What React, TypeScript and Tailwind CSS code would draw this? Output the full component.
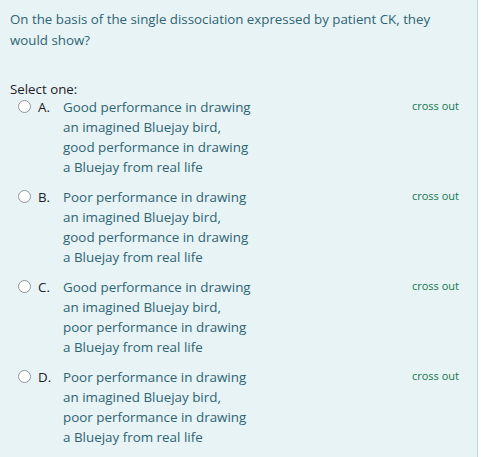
import React from "react";

const options = [
  { l: "A.", t: ["Good performance in drawing", "an imagined Bluejay bird,", "good performance in drawing", "a Bluejay from real life"] },
  { l: "B.", t: ["Poor performance in drawing", "an imagined Bluejay bird,", "good performance in drawing", "a Bluejay from real life"] },
  { l: "C.", t: ["Good performance in drawing", "an imagined Bluejay bird,", "poor performance in drawing", "a Bluejay from real life"] },
  { l: "D.", t: ["Poor performance in drawing", "an imagined Bluejay bird,", "poor performance in drawing", "a Bluejay from real life"] },
];

export default function App() {
  return (
    <div
      className="w-[478px] h-[457px] bg-[#e7f3f5] border-r border-[#b8dce2] text-[#2f6473] pl-[10px] pr-[18px] pt-[9px] overflow-hidden"
      style={{ fontFamily: '"Open Sans", "Noto Sans", sans-serif' }}
    >
      <p className="text-[13.3px] leading-[21px]">
        On the basis of the single dissociation expressed by patient CK, they would show?
      </p>
      <div className="mt-[29.5px] text-[13.3px] leading-[16px] text-[#1d2125]">Select one:</div>
      <div className="flex flex-col">
        {options.map((o) => (
          <div key={o.l} className="flex items-start pb-[9.2px]">
            <div className="flex items-center h-[20px] pl-[8px]">
              <span className="w-[13px] h-[13px] rounded-full border border-[#8f959e] bg-white" />
            </div>
            <span className="ml-[7px] w-[25px] text-[13.3px] leading-[20px] text-[#1d2125]">{o.l}</span>
            <div className="text-[13.4px] leading-[20.2px] flex-1">
              {o.t.map((line, i) => (
                <div key={i}>{line}</div>
              ))}
            </div>
            <span className="text-[11px] leading-[18px] text-[#15774f]">cross out</span>
          </div>
        ))}
      </div>
    </div>
  );
}
